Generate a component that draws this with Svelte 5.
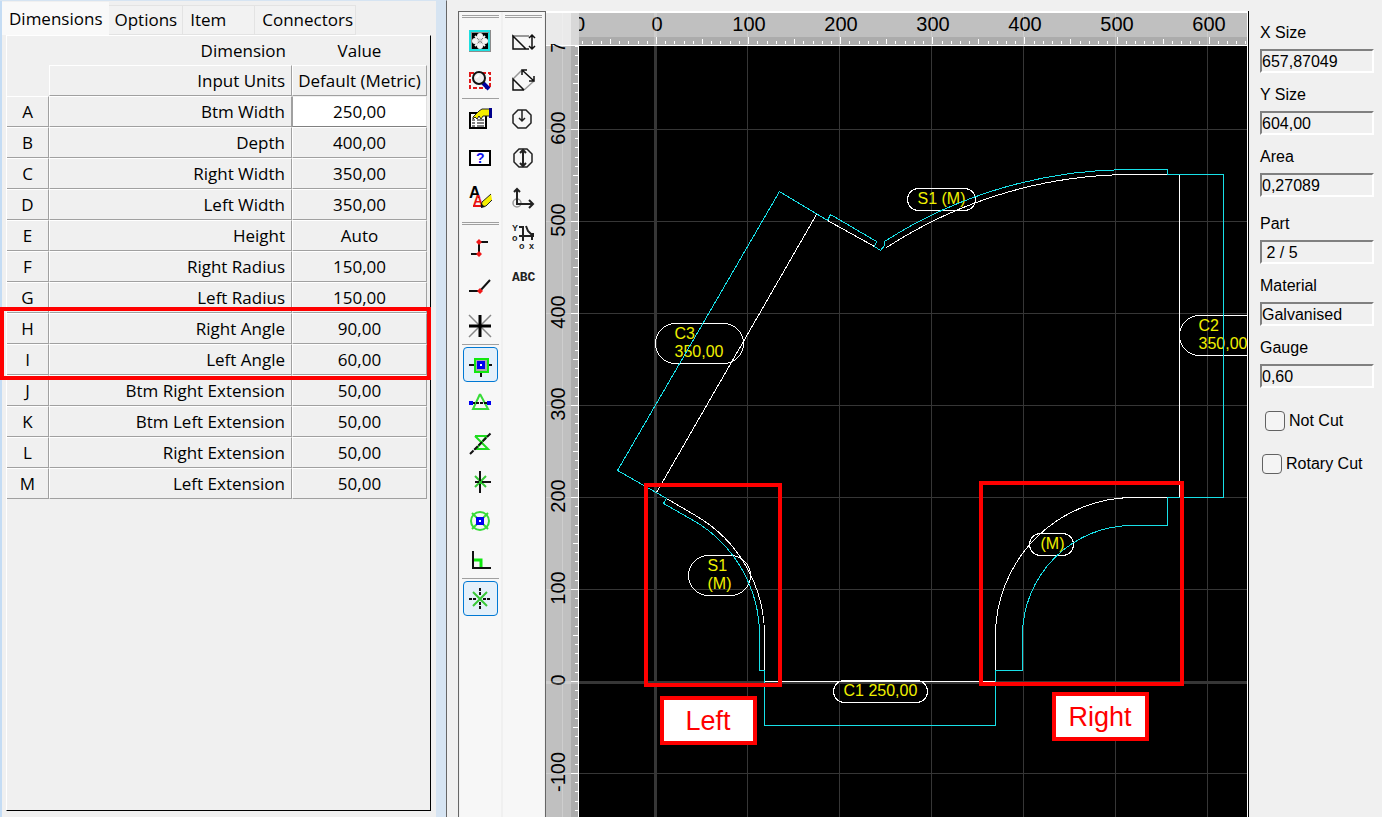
<script>
  const tabs = ['Dimensions', 'Options', 'Item', 'Connectors'];
  let activeTab = $state('Dimensions');
  let btmWidth = $state('250,00');

  const dimensions = [
    { key: 'B', name: 'Depth', value: '400,00' },
    { key: 'C', name: 'Right Width', value: '350,00' },
    { key: 'D', name: 'Left Width', value: '350,00' },
    { key: 'E', name: 'Height', value: 'Auto' },
    { key: 'F', name: 'Right Radius', value: '150,00' },
    { key: 'G', name: 'Left Radius', value: '150,00' },
    { key: 'H', name: 'Right Angle', value: '90,00' },
    { key: 'I', name: 'Left Angle', value: '60,00' },
    { key: 'J', name: 'Btm Right Extension', value: '50,00' },
    { key: 'K', name: 'Btm Left Extension', value: '50,00' },
    { key: 'L', name: 'Right Extension', value: '50,00' },
    { key: 'M', name: 'Left Extension', value: '50,00' }
  ];

  const info = [
    { id: 'xsize', label: 'X Size', value: '657,87049' },
    { id: 'ysize', label: 'Y Size', value: '604,00' },
    { id: 'area', label: 'Area', value: '0,27089' },
    { id: 'part', label: 'Part', value: ' 2 / 5', spaced: true },
    { id: 'material', label: 'Material', value: 'Galvanised' },
    { id: 'gauge', label: 'Gauge', value: '0,60' }
  ];

  // Each toolbar is a list of groups, divided by a separator line
  const viewBar = [
    ['Zoom extents', 'Zoom window'],
    ['Properties', 'Help', 'Edit text']
  ];
  const snapBar = [
    ['Ortho corner', 'Angle', 'Star'],
    ['Snap end', 'Snap middle', 'Snap nearest', 'Snap cross', 'Snap centre', 'Snap perpendicular'],
    ['Snap point']
  ];
  const measureBar = [
    ['Linear', 'Aligned', 'Radius', 'Diameter', 'Axes', 'Ordinate', 'Label']
  ];

  let pressed = $state({ 'Snap end': true, 'Snap point': true });

  const icons = {
    'Zoom extents': `
      <path fill="#8c8c8c" d="M0 0h22v22H0z"/><path fill="#1de0e0" d="M0 0h21v21H0z"/>
      <path fill="#000" d="M3 3h16v16H3z"/><path fill="#8c8c8c" d="M2 2h18v1H3v16H2z"/>
      <g fill="#f4f4f4"><circle cx="11" cy="6" r="3"/><circle cx="11" cy="16" r="3"/><circle cx="6" cy="11" r="3"/><circle cx="16" cy="11" r="3"/></g>
      <path stroke="#f4f4f4" stroke-width="2" d="M6 6l10 10M16 6L6 16"/>
      <path stroke="#555" stroke-dasharray="1 1" d="M8 8l6 6M14 8l-6 6"/>`,
    'Zoom window': `
      <path fill="none" stroke="#e01818" stroke-width="2" stroke-dasharray="4 2" d="M1 4h20v15H1z"/>
      <path stroke="#00009c" stroke-width="4" d="M14 14l6 6"/>
      <circle cx="10" cy="9" r="6" fill="#eee" stroke="#111" stroke-width="2"/>
      <path stroke="#fff" stroke-width="2" d="M7 9l3-3"/>`,
    'Properties': `
      <path fill="#fff" stroke="#000" stroke-width="2" d="M1 5h16v15H1z"/>
      <path stroke="#000" d="M3 12h3M8 12h7M3 15h3M8 15h7M3 18h3M8 18h7" stroke-width="1"/>
      <path fill="#f6ee00" stroke="#222" d="M4 9l6-6 3-2h8v7h-7l-2 3-2-3-2 3-2-2-2 2z"/>
      <path fill="#00008c" d="M20 0h3v10h-3z"/>`,
    'Help': `
      <path fill="#fff" stroke="#000" stroke-width="2" d="M1 4h20v14H1z"/>
      <text x="7" y="16" font-size="14" font-weight="700" fill="#1010f0">?</text>`,
    'Edit text': `
      <text x="0" y="12" font-size="16" font-weight="700" fill="#000">A</text>
      <text x="4" y="19" font-size="14" font-weight="700" fill="#e81010">A</text>
      <path stroke="#e81010" stroke-width="2" d="M4 20h8"/>
      <path fill="#f6ee00" stroke="#222" d="M22 8l-9 8-1 5 5-1 6-6"/>
      <path fill="#111" d="M12 17l4 4-4 1z"/>`,
    'Ortho corner': `
      <path fill="none" stroke="#111" stroke-width="2" d="M2 17h8V5h9"/>
      <path fill="#f01818" d="M10 2l3 3-3 3-3-3zM10 14l3 3-3 3-3-3z"/>`,
    'Angle': `
      <path fill="none" stroke="#111" stroke-width="2" d="M0 15h11L21 4"/>
      <path fill="#f01818" d="M11 12l3 3-3 3-3-3z"/>`,
    'Star': `
      <path stroke="#888" stroke-width="1.5" d="M0 0l22 22M22 0L0 22"/>
      <path stroke="#000" stroke-width="3" d="M11 0v22M0 11h22"/>`,
    'Snap end': `
      <path stroke="#111" stroke-width="2" d="M0 11h6M18 11h5M12 17v6"/>
      <path fill="#aaa" stroke="#10e810" stroke-width="2" d="M6 5h13v13H6z"/>
      <path fill="#0000f0" d="M8 7h8v8H8z"/><path fill="#fff" d="M11 10h2v2h-2z"/>`,
    'Snap middle': `
      <path fill="none" stroke="#38dc38" stroke-width="2" d="M11 1L4 16h15L11 1"/>
      <path stroke="#111" stroke-width="2" stroke-dasharray="3 1" d="M3 10h15"/>
      <path fill="#0000f0" d="M0 8h4v4H0zM18 8h4v4h-4z"/>`,
    'Snap nearest': `
      <path fill="none" stroke="#20dc20" stroke-width="2" d="M6 4h12L7 17h12L6 4"/>
      <path stroke="#111" stroke-width="2" stroke-dasharray="5 1" d="M1 22L22 1"/>`,
    'Snap cross': `
      <path stroke="#38c838" stroke-width="2" d="M6 5l11 11M17 5L6 16"/>
      <path stroke="#111" stroke-width="2" d="M11 0v22M6 11h16"/>
      <path fill="#20c020" d="M10 10h3v3h-3z"/>`,
    'Snap centre': `
      <circle cx="11" cy="11" r="9" fill="none" stroke="#38dc38" stroke-width="2"/>
      <path stroke="#38dc38" stroke-width="2" d="M3 3l5 5M19 3l-5 5M3 19l5-5M19 19l-5-5"/>
      <path fill="#0000f0" d="M7 7h8v8H7z"/><path fill="#fff" d="M10 10h2v2h-2z"/>`,
    'Snap perpendicular': `
      <path fill="none" stroke="#111" stroke-width="2" d="M4 2v17h18"/>
      <path fill="none" stroke="#10e810" stroke-width="3" d="M5 11h7v7"/>`,
    'Snap point': `
      <path stroke="#38c838" stroke-width="2" d="M4 4l14 14M18 4L4 18"/>
      <path stroke="#111" stroke-width="2" stroke-dasharray="3 1" d="M11 0v8M11 14v8M0 11h8M14 11h8"/>`,
    'Linear': `
      <path stroke="#999" stroke-width="2" d="M0 6h17"/>
      <path fill="none" stroke="#111" stroke-width="1.5" d="M14 19L1 6v13h16"/>
      <path fill="none" stroke="#111" stroke-width="1.5" d="M20 5v14M17 8l3-3 3 3M17 16l3 3 3-3"/>`,
    'Aligned': `
      <path stroke="#999" stroke-width="1.5" d="M1 10l9-9M12 21l10-9"/>
      <path fill="none" stroke="#111" stroke-width="1.5" d="M12 21L1 10v11h11"/>
      <path fill="none" stroke="#111" stroke-width="1.5" d="M10 1l12 11M10 6V1h5M17 12h5V7"/>`,
    'Radius': `
      <path fill="none" stroke="#222" stroke-width="1.5" d="M6 2h8l5 5v8l-5 5H6l-5-5V7z"/>
      <path fill="none" stroke="#222" stroke-width="1.5" d="M10 2v11M7 10l3 3 3-3"/>`,
    'Diameter': `
      <path fill="none" stroke="#222" stroke-width="1.5" d="M7 2h8l5 5v8l-5 5H7l-5-5V7z"/>
      <path fill="none" stroke="#222" stroke-width="2" d="M11 2v18M8 6l3-3 3 3M8 16l3 3 3-3"/>`,
    'Axes': `
      <circle cx="5" cy="17" r="4" fill="none" stroke="#999" stroke-width="1.5"/>
      <path fill="none" stroke="#222" stroke-width="2" d="M5 3v15h16M2 6l3-3 3 3M17 14l4 4-4 4"/>`,
    'Ordinate': `
      <g font-size="9" font-weight="700" fill="#222"><text x="0" y="6">Y</text><text x="0" y="16">o</text><text x="7" y="24">o</text><text x="17" y="24">x</text></g>
      <path fill="none" stroke="#222" stroke-width="2" d="M7 2h4v14M7 11h15M14 1l2 5 3 3h3M20 11v4"/>`,
    'Label': `
      <text x="0" y="17" font-size="13" font-weight="700" fill="#222" font-family="Liberation Mono, monospace">ABC</text>`
  };

  // The drawing area: 100 units are 92 pixels, the origin is the duct's zero point
  const STEP = 92;
  const gridX = range(0, 15).map((n) => n * STEP);
  const gridY = range(-8, 6).map((n) => -n * STEP);
  const ticksX = range(-8, 150).map((n) => ({ pos: Math.round(n * 9.21), len: tickLength(n) }));
  const ticksY = range(-80, 69).map((n) => ({ pos: Math.round(-n * 9.2), len: tickLength(n) }));
  const labelsX = range(-1, 6);
  const labelsY = range(-1, 7);

  const tags = [
    { x: 251, y: -494, w: 68, h: 22, tx: 261, lines: ['S1 (M)'] },
    { x: -1, y: -359, w: 88, h: 40, tx: 18, lines: ['C3', '350,00'] },
    { x: 523, y: -367, w: 88, h: 40, tx: 542, lines: ['C2', '350,00'] },
    { x: 32, y: -127, w: 62, h: 40, tx: 51, lines: ['S1', '(M)'] },
    { x: 373, y: -149, w: 44, h: 22, tx: 384, lines: ['(M)'] },
    { x: 177, y: -2, w: 94, h: 22, tx: 187, lines: ['C1 250,00'] }
  ];

  function range(from, to) {
    return Array.from({ length: to - from + 1 }, (_, i) => from + i);
  }

  function tickLength(n) {
    if (n % 10 === 0) return 7;
    return n % 5 === 0 ? 5 : 3;
  }

  function toggle(name) {
    if (name in pressed) pressed[name] = !pressed[name];
  }
</script>

{#snippet toolbar(groups)}
  <div class="toolbar" role="toolbar">
    <div class="grip"></div>
    {#each groups as group}
      <div class="group">
        {#each group as name}
          <button class="tool" class:pressed={pressed[name]} title={name} aria-label={name} onclick={() => toggle(name)}>
            <svg width="22" height="22" viewBox="0 0 22 22">{@html icons[name]}</svg>
          </button>
        {/each}
      </div>
    {/each}
  </div>
{/snippet}

<main class="app">
  <section class="editor">
    <div class="tabs" role="tablist">
      {#each tabs as tab}
        <button role="tab" class="tab" class:active={activeTab === tab} aria-selected={activeTab === tab} onclick={() => (activeTab = tab)}>{tab}</button>
      {/each}
    </div>
    <div class="sheet">
      <table>
        <colgroup><col class="key" /><col class="name" /><col class="value" /></colgroup>
        <thead>
          <tr><th></th><th class="name">Dimension</th><th>Value</th></tr>
        </thead>
        <tbody>
          <tr><td class="blank"></td><td class="name">Input Units</td><td>Default (Metric)</td></tr>
          <tr>
            <td>A</td>
            <td class="name"><label for="btm-width">Btm Width</label></td>
            <td class="edit"><input id="btm-width" bind:value={btmWidth} /></td>
          </tr>
          {#each dimensions as row}
            <tr><td>{row.key}</td><td class="name">{row.name}</td><td>{row.value}</td></tr>
          {/each}
        </tbody>
      </table>
    </div>
    <div class="highlight"></div>
  </section>

  <section class="workspace">
    <div class="dock">
      <div class="dock-column">
        {@render toolbar(viewBar)}
        {@render toolbar(snapBar)}
      </div>
      <div class="dock-column">
        {@render toolbar(measureBar)}
      </div>
    </div>

    <div class="canvas">
      <svg class="drawing" width="100%" height="100%">
        <defs>
          <clipPath id="top-clip"><rect x="33" y="0" width="3000" height="40" /></clipPath>
          <clipPath id="side-clip"><rect x="0" y="32" width="40" height="3000" /></clipPath>
        </defs>

        <g shape-rendering="crispEdges">
          <rect width="100%" height="33" fill="#c0c0c0" />
          <rect y="25" width="100%" height="8" fill="#acacac" />
          <rect width="33" height="100%" fill="#c0c0c0" />
          <rect x="25" y="25" width="8" height="100%" fill="#acacac" />
          <rect width="33" height="33" fill="#eaeaea" />
          <rect x="25" width="8" height="33" fill="#d8d8d8" />
          <rect width="100%" height="1" fill="#fff" />
          <rect y="33" width="100%" height="1" fill="#fff" />
          <rect x="32" y="33" width="1" height="100%" fill="#fff" />
          <rect x="16" width="1" height="100%" fill="#fff" opacity="0.22" />
        </g>

        <g transform="translate(110 669)" shape-rendering="crispEdges" fill="#fff">
          {#each ticksX as tick}
            <rect x={tick.pos} y={-637 - tick.len} width="1" height={tick.len} />
          {/each}
          {#each ticksY as tick}
            <rect x={-78 - tick.len} y={tick.pos} width={tick.len} height="1" />
          {/each}
        </g>

        <g class="ruler-text" clip-path="url(#top-clip)">
          {#each labelsX as n}
            <text x={111 + n * STEP} y="19">{n * 100}</text>
          {/each}
        </g>
        <g class="ruler-text" clip-path="url(#side-clip)">
          {#each labelsY as n}
            <text transform="translate(19 {668 - n * STEP}) rotate(-90)">{n * 100}</text>
          {/each}
        </g>

        <g transform="translate(109 670)" shape-rendering="crispEdges" fill="#fff" opacity="0.21">
          {#each gridX as x}
            <rect x={x === 0 ? -1 : x} y="-669" width={x === 0 ? 3 : 1} height="3000" />
          {/each}
          {#each gridY as y}
            <rect x="-109" y={y === 0 ? -1 : y - 1} width="3000" height={y === 0 ? 3 : 1} />
          {/each}
        </g>

        <g transform="translate(110.5 670.5)">
          <g class="tag">
            {#each tags as tag}
              <rect x={tag.x} y={tag.y} width={tag.w} height={tag.h} rx={tag.h / 2} shape-rendering="crispEdges" />
              {#each tag.lines as line, i}
                <text x={tag.tx} y={tag.y + 15 + i * 18}>{line}</text>
              {/each}
            {/each}
          </g>
          <g fill="none" shape-rendering="crispEdges">
            <path
              stroke="#fff"
              d="M160 -468L0 -190M171 -462L218 -436M10 -184L39 -167A138 138 0 0 1 108 -47V-12M108 -1H339
                 M339 -12V-47A138 138 0 0 1 477 -185H511M523 -508V-185M511 -508H477A452 452 0 0 0 230 -435"
            />
            <path
              stroke="#18e0e8"
              d="M123 -491L-39 -212L10 -184L7 -179L37 -162A133 133 0 0 1 103 -47V-12H108V43H339V-12H366V-47
                 A110 110 0 0 1 477 -157H511V-185H567V-508H511V-513H477A457 457 0 0 0 228 -441V-437L224 -432
                 L218 -436L220 -441L174 -468L171 -462Z"
            />
          </g>
        </g>

        <g class="marks" transform="translate(110 670)">
          <rect x="-10" y="-197" width="134" height="200" />
          <rect x="325" y="-199" width="201" height="201" />
          <rect class="plate" x="6" y="16" width="93" height="45" />
          <text x="52" y="48">Left</text>
          <rect class="plate" x="398" y="12" width="93" height="45" />
          <text x="444" y="44">Right</text>
        </g>
      </svg>
    </div>

    <aside class="info">
      {#each info as field}
        <div class="field" class:spaced={field.spaced}>
          <label for={field.id}>{field.label}</label>
          <input id={field.id} value={field.value} readonly />
        </div>
      {/each}
      <label class="check not-cut"><input type="checkbox" />Not Cut</label>
      <label class="check"><input type="checkbox" />Rotary Cut</label>
    </aside>
  </section>
</main>

<style>
  :global(body) {
    margin: 0;
  }

  .app {
    display: flex;
    height: 100vh;
    overflow: hidden;
    background: #f0f0f0;
    color: #000;
  }

  /* Dimension editor */
  .editor {
    position: relative;
    box-sizing: border-box;
    flex: 0 0 447px;
    display: flex;
    flex-direction: column;
    padding: 1px 0 6px 2px;
    border-top: 1px solid #d6e4f2;
    border-right: 1px solid #666;
    box-shadow: inset 2px 0 #c4dcf4, inset -10px 0 #d6e4f2;
    font-family: 'Segoe UI', 'Open Sans', 'Noto Sans', sans-serif;
    font-size: 17px;
  }

  .tabs {
    display: flex;
    align-items: flex-end;
    height: 33px;
  }

  .tab {
    height: 30px;
    padding: 0 5px;
    border: 1px solid #e3e3e3;
    border-left: none;
    background: #f2f2f2;
    font: inherit;
    color: inherit;
    line-height: 28px;
    text-align: left;
  }

  .tab.active {
    height: 33px;
    padding: 0 7px;
    border: none;
    background: #f9f9f9;
    line-height: 31px;
  }

  .tab:nth-child(3) {
    width: 72px;
    padding: 0 7px;
  }

  .tab:nth-child(4) {
    width: 101px;
    padding: 0 0 0 7px;
  }

  .sheet {
    flex: 1;
    margin: 0 15px 0 4px;
    border: 1px solid;
    border-color: #fff #000 #000 #fff;
  }

  table {
    table-layout: fixed;
    width: 420px;
    border-collapse: separate;
    border-spacing: 0;
    line-height: 24px;
  }

  col.key {
    width: 42px;
  }

  col.name {
    width: 243px;
  }

  th,
  td {
    box-sizing: border-box;
    height: 31px;
    padding: 0;
    font-weight: 400;
    text-align: center;
  }

  th {
    height: 29px;
  }

  td {
    border: 1px solid;
    border-color: #fff #a0a0a0 #a0a0a0 #fff;
  }

  td:first-child {
    border-left: none;
  }

  td.blank {
    border-color: transparent;
  }

  .name {
    padding-right: 6px;
    text-align: right;
  }

  .edit {
    background: #fff;
    border-color: #f0f0f0 #e0e0e0 #808080 #a0a0a0;
  }

  .edit input {
    display: block;
    box-sizing: border-box;
    width: 100%;
    height: 28px;
    padding: 0;
    border: none;
    background: #fff;
    font: inherit;
    color: inherit;
    text-align: center;
    outline: none;
  }

  .highlight {
    position: absolute;
    box-sizing: border-box;
    top: 306px;
    left: 0;
    width: 431px;
    height: 73px;
    border: 4px solid #f00;
  }

  /* Workspace */
  .workspace {
    flex: 1;
    display: flex;
    min-width: 0;
    padding-top: 11px;
    font-family: Arial, 'Liberation Sans', sans-serif;
    font-size: 16px;
  }

  .dock {
    display: flex;
    flex: none;
    gap: 2px;
    margin-left: 11px;
    padding: 0 1px;
    border: 1px solid #666;
    border-bottom: none;
    background: #f0f0f0;
  }

  .dock-column {
    display: flex;
    flex-direction: column;
    width: 41px;
    background: #f7f7f7;
  }

  .toolbar {
    padding: 3px 2px 4px;
  }

  .grip {
    height: 1px;
    margin-bottom: 5px;
    border: solid #a0a0a0;
    border-width: 1px 0;
  }

  .group {
    display: flex;
    flex-direction: column;
    align-items: center;
    gap: 4px;
    padding-bottom: 1px;
  }

  .group + .group {
    padding-top: 2px;
    border-top: 1px solid #a0a0a0;
  }

  .tool {
    display: flex;
    align-items: center;
    justify-content: center;
    width: 35px;
    height: 35px;
    padding: 0 2px 0 0;
    border: 1px solid transparent;
    border-radius: 4px;
    background: none;
  }

  .tool svg {
    flex: none;
    overflow: visible;
  }

  .tool.pressed {
    border-color: #0078d4;
    background: #e4f0fa;
  }

  .canvas {
    flex: 1;
    min-width: 0;
    border-top: 1px solid #fff;
    border-right: 1px solid #fff;
    background: #000;
    overflow: hidden;
  }

  .drawing {
    display: block;
  }

  .ruler-text {
    font-size: 20px;
    text-anchor: middle;
  }

  .tag rect {
    fill: none;
    stroke: #fff;
  }

  .tag text {
    fill: #f0f000;
  }

  .marks {
    font-size: 27px;
    text-anchor: middle;
    fill: #f00;
  }

  .marks rect {
    fill: none;
    stroke: #f00;
    stroke-width: 4px;
  }

  .marks .plate {
    fill: #fff;
  }

  /* Part information */
  .info {
    box-sizing: border-box;
    flex: 0 0 134px;
    padding: 12px 8px 0 11px;
    border-left: 1px solid #000;
  }

  .field {
    display: flex;
    flex-direction: column;
    gap: 6px;
    margin-bottom: 12px;
    line-height: 20px;
  }

  .field.spaced {
    margin-top: 17px;
  }

  .field input {
    box-sizing: border-box;
    width: 100%;
    height: 24px;
    padding: 1px 0 0;
    border: 2px solid;
    border-color: #808080 #fff #fff #808080;
    background: #f0f0f0;
    font: inherit;
    color: inherit;
    outline: none;
  }

  .check {
    display: flex;
    align-items: center;
    gap: 4px;
    height: 20px;
    margin: 23px 0 0 2px;
    white-space: nowrap;
  }

  .check.not-cut {
    margin: 23px 0 0 5px;
  }

  .check input {
    appearance: none;
    box-sizing: border-box;
    width: 20px;
    height: 20px;
    margin: 0;
    border: 1px solid #626262;
    border-radius: 4px;
    background: #f4f4f4;
  }
</style>
